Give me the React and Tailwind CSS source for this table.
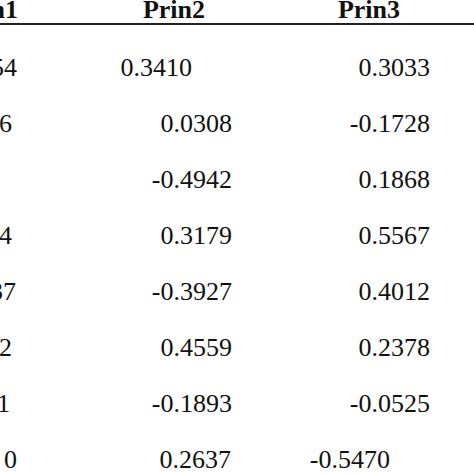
import React from "react";

const rows = [
  { c1: "54", p1: "pr-[1px]", c2: "0.3410", c3: "0.3033", p2: "pr-[40px]" },
  { c1: "6", p1: "pr-[6px]", c2: "0.0308", c3: "-0.1728" },
  { c1: "", c2: "-0.4942", c3: "0.1868" },
  { c1: "4", p1: "pr-[6px]", c2: "0.3179", c3: "0.5567" },
  { c1: "37", p1: "pr-[2px]", c2: "-0.3927", c3: "0.4012" },
  { c1: "2", p1: "pr-[6px]", c2: "0.4559", c3: "0.2378" },
  { c1: "1", p1: "pr-[8px]", c2: "-0.1893", c3: "-0.0525" },
  { c1: "0", p1: "pr-[1px]", c2: "0.2637", c3: "-0.5470", p2: "pr-[1px]", p3: "pr-[40px]" },
];

const App = () => {
  return (
    <div className="w-[474px] h-[474px] overflow-hidden bg-white text-[#111] font-['Liberation_Serif',serif] text-[26px]">
      <div className="grid grid-cols-[18px_214px_198px_1fr] border-b-2 border-[#222] pb-[3px] leading-[20px] font-bold">
        <div className="flex justify-end whitespace-nowrap">
          <span>Prin1</span>
        </div>
        <div className="text-right pr-[27px]">Prin2</div>
        <div className="text-right pr-[30px]">Prin3</div>
        <div />
      </div>

      <div className="mt-[15px]">
        {rows.map((row, i) => (
          <div
            key={i}
            className="grid grid-cols-[18px_214px_198px_1fr] leading-[56px]"
          >
            <div className={`flex justify-end whitespace-nowrap ${row.p1 || ""}`}>
              <span>{row.c1}</span>
            </div>
            <div className={`text-right ${row.p2 || ""}`}>{row.c2}</div>
            <div className={`text-right ${row.p3 || ""}`}>{row.c3}</div>
            <div />
          </div>
        ))}
      </div>
    </div>
  );
};

export default App;
